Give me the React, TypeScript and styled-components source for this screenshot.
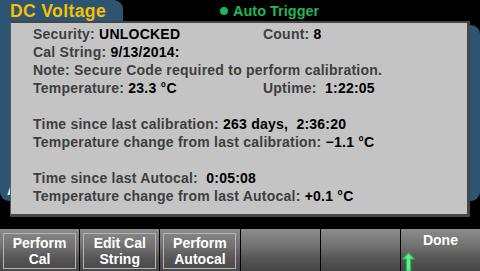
import React from "react";
import styled, { createGlobalStyle } from "styled-components";

const Global = createGlobalStyle`
  html, body { margin: 0; padding: 0; background: #000; }
  body { width: 480px; height: 271px; overflow: hidden; font-family: "Liberation Sans", Arial, sans-serif; }
`;

const Screen = styled.div`
  width: 480px;
  height: 271px;
  background: #000;
  display: flex;
  flex-direction: column;
`;

const DisplayArea = styled.div`
  position: relative;
  height: 229px;
  display: flex;
  flex-direction: column;
`;

const TopRow = styled.div`
  height: 25px;
  display: flex;
  align-items: stretch;
`;

const FunctionTab = styled.div`
  width: 123px;
  background: #2d5572;
  border-top-right-radius: 9px;
  color: #f7c000;
  font-weight: bold;
  font-size: 17.5px;
  letter-spacing: 0.4px;
  padding-left: 10px;
  box-sizing: border-box;
  line-height: 22px;
`;

const Trigger = styled.div`
  margin-left: 97px;
  display: flex;
  align-items: center;
  gap: 5px;
  color: #1fb656;
  font-weight: bold;
  font-size: 14.5px;
  height: 22px;
`;

const Dot = styled.span`
  width: 8px;
  height: 8px;
  border-radius: 50%;
  background: #1fb656;
`;

const MainPanel = styled.div`
  height: 176px;
  background: #2d5572;
  border-radius: 0 9px 9px 9px;
  padding: 157px 0 0 7px;
  box-sizing: border-box;
  color: #fff;
  font-weight: bold;
  font-size: 14px;
`;

const Dialog = styled.div`
  position: absolute;
  left: 10px;
  top: 21px;
  width: 460px;
  height: 196px;
  box-sizing: border-box;
  background: #c4c4c4;
  border-top: 2px solid #464646;
  border-right: 3px solid #464646;
  border-bottom: 3px solid #464646;
  border-left: 1px solid #5c5c5c;
  padding: 2px 0 0 22px;
  font-weight: bold;
  font-size: 14px;
  color: #3e3e3e;
  letter-spacing: 0.23px;
`;

const Line = styled.div`
  height: 18px;
  line-height: 18px;
  white-space: pre;
  display: grid;
  grid-template-columns: 230px auto;
`;

const Value = styled.span`
  color: #000;
`;

const SoftkeyBar = styled.div`
  height: 42px;
  display: flex;
  gap: 1px;
`;

const Softkey = styled.div`
  flex: 1;
  position: relative;
  background: linear-gradient(#8c8c8c 0%, #6e6e6e 45%, #555 70%, #474747 100%);
  color: #fff;
  font-weight: bold;
  font-size: 14px;
  display: flex;
  flex-direction: column;
  align-items: center;
  justify-content: flex-start;
  padding-top: 4px;
  box-sizing: border-box;
`;

const KeyFrame = styled.div`
  width: 73px;
  height: 36px;
  border: 1px solid #b4b4b4;
  box-sizing: border-box;
  display: flex;
  flex-direction: column;
  align-items: center;
  justify-content: center;
  line-height: 16px;
  padding-bottom: 1px;
`;

const DoneLabel = styled.div`
  line-height: 14px;
`;

const ArrowIcon = styled.svg`
  position: absolute;
  left: 1px;
  bottom: 0;
`;

export default function App() {
  return (
    <Screen>
      <Global />
      <DisplayArea>
        <TopRow>
          <FunctionTab>DC Voltage</FunctionTab>
          <Trigger>
            <Dot />
            Auto Trigger
          </Trigger>
        </TopRow>
        <MainPanel>A</MainPanel>
        <Dialog>
          <Line>
            <span>
              Security: <Value>UNLOCKED</Value>
            </span>
            <span>
              Count: <Value>8</Value>
            </span>
          </Line>
          <Line>
            <span>
              Cal String: <Value>9/13/2014:</Value>
            </span>
          </Line>
          <Line>
            <span>Note: Secure Code required to perform calibration.</span>
          </Line>
          <Line>
            <span>
              Temperature: <Value>23.3 °C</Value>
            </span>
            <span>
              Uptime:  <Value>1:22:05</Value>
            </span>
          </Line>
          <Line />
          <Line>
            <span>
              Time since last calibration: <Value>263 days,  2:36:20</Value>
            </span>
          </Line>
          <Line>
            <span>
              Temperature change from last calibration: <Value>−1.1 °C</Value>
            </span>
          </Line>
          <Line />
          <Line>
            <span>
              Time since last Autocal:  <Value>0:05:08</Value>
            </span>
          </Line>
          <Line>
            <span>
              Temperature change from last Autocal: <Value>+0.1 °C</Value>
            </span>
          </Line>
        </Dialog>
      </DisplayArea>
      <SoftkeyBar>
        <Softkey>
          <KeyFrame>
            <span>Perform</span>
            <span>Cal</span>
          </KeyFrame>
        </Softkey>
        <Softkey>
          <KeyFrame>
            <span>Edit Cal</span>
            <span>String</span>
          </KeyFrame>
        </Softkey>
        <Softkey>
          <KeyFrame>
            <span>Perform</span>
            <span>Autocal</span>
          </KeyFrame>
        </Softkey>
        <Softkey />
        <Softkey />
        <Softkey>
          <DoneLabel>Done</DoneLabel>
          <ArrowIcon width="13" height="19" viewBox="0 0 13 19">
            <path
              d="M6.5 0.8 L12.2 7 L8.6 7 L8.6 19 L4.4 19 L4.4 7 L0.8 7 Z"
              fill="#5cf08a"
              stroke="#2fb85a"
              strokeWidth="1.2"
            />
          </ArrowIcon>
        </Softkey>
      </SoftkeyBar>
    </Screen>
  );
}
